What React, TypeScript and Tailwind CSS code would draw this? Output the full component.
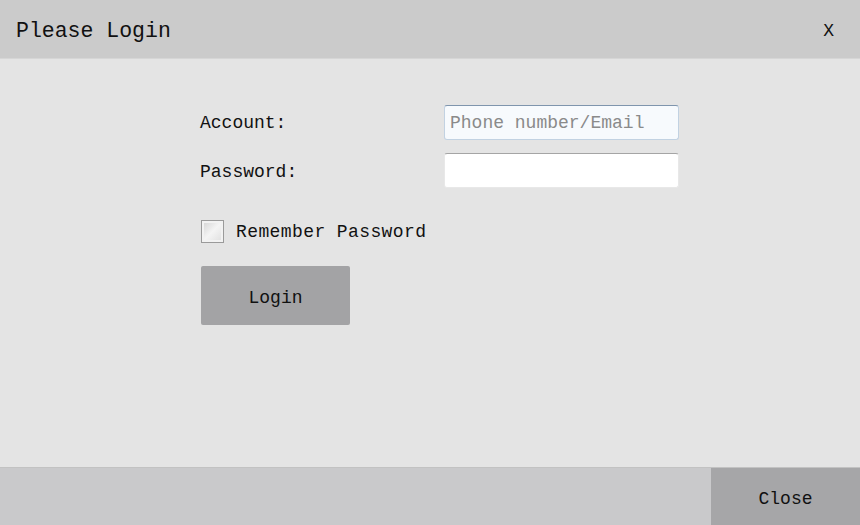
export default function App() {
  const mono = { fontFamily: '"Liberation Mono", "DejaVu Sans Mono", monospace' };
  return (
    <div className="w-[860px] h-[525px] flex flex-col bg-[#e4e4e4] text-[#111]" style={mono}>
      <header className="h-[59px] flex items-center justify-between pl-4 pr-[26px] pt-1 bg-[#cbcbcb] border-b border-[#d6d6d6]">
        <span className="text-[21.5px]">Please Login</span>
        <span className="text-[18px]">X</span>
      </header>

      <main className="flex-1 pl-[200px] pt-[46px]">
        <div className="flex flex-col gap-[13px] w-[479px]">
          <div className="flex items-center h-[35px]">
            <label className="w-[244px] shrink-0 text-[18px] pt-px">Account:</label>
            <input
              className="min-w-0 flex-1 h-[35px] px-[5px] rounded-[3px] bg-[#f7fafd] border border-[#c2d2e2] border-t-[#7f95ad] text-[18px] outline-none placeholder:text-[#8a8a8a]"
              placeholder="Phone number/Email"
              style={mono}
            />
          </div>
          <div className="flex items-center h-[35px]">
            <label className="w-[244px] shrink-0 text-[18px] pt-[3px]">Password:</label>
            <input
              type="password"
              className="min-w-0 flex-1 h-[35px] px-[5px] rounded-[3px] bg-white border border-[#e8e8e8] border-t-[#a5a5a5] outline-none"
            />
          </div>
        </div>

        <div className="flex items-center gap-3 mt-[32px] h-[23px] pl-px">
          <span className="w-[23px] h-[23px] border border-[#9a9a9a] p-[2px] bg-[#f2f2f2]">
            <span className="block w-full h-full bg-gradient-to-br from-[#d8d8d8] via-[#f4f4f4] to-[#e2e2e2]" />
          </span>
          <span className="text-[18px] tracking-[0.4px] pt-px">Remember Password</span>
        </div>

        <button className="mt-[23px] ml-px w-[149px] h-[59px] pt-[5px] rounded-[2px] bg-[#a3a3a5] text-[18px]" style={mono}>
          Login
        </button>
      </main>

      <footer className="h-[58px] flex justify-end bg-[#c9c9cb] border-t border-[#c2c2c2]">
        <button className="w-[149px] h-full pt-[6px] bg-[#a6a6a8] text-[18px]" style={mono}>
          Close
        </button>
      </footer>
    </div>
  );
}
